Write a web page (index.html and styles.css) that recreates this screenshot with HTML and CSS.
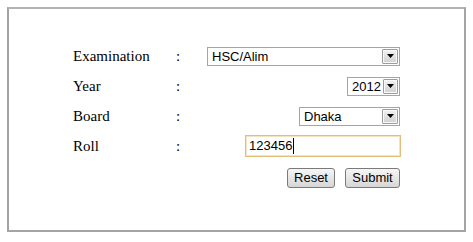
FILE: index.html
```html
<!DOCTYPE html>
<html>
<head>
    <meta charset="utf-8">
    <title>Result</title>
    <link rel="stylesheet" href="styles.css">
</head>
<body>
<div class="frame">
    <div class="form">
        <div class="label">Examination</div>
        <div class="colon">:</div>
        <div class="field">
            <div class="select sel-exam">
                <span class="value">HSC/Alim</span>
                <span class="arrow"><svg width="7" height="4" viewBox="0 0 7 4"><path d="M0 0H7L3.5 4Z" fill="#000"/></svg></span>
            </div>
        </div>

        <div class="label">Year</div>
        <div class="colon">:</div>
        <div class="field">
            <div class="select sel-year">
                <span class="value">2012</span>
                <span class="arrow"><svg width="7" height="4" viewBox="0 0 7 4"><path d="M0 0H7L3.5 4Z" fill="#000"/></svg></span>
            </div>
        </div>

        <div class="label">Board</div>
        <div class="colon">:</div>
        <div class="field">
            <div class="select sel-board">
                <span class="value">Dhaka</span>
                <span class="arrow"><svg width="7" height="4" viewBox="0 0 7 4"><path d="M0 0H7L3.5 4Z" fill="#000"/></svg></span>
            </div>
        </div>

        <div class="label">Roll</div>
        <div class="colon">:</div>
        <div class="field">
            <div class="textbox">123456<span class="caret"></span></div>
        </div>

        <div class="buttons">
            <span class="btn btn-reset">Reset</span>
            <span class="btn btn-submit">Submit</span>
        </div>
    </div>
</div>
</body>
</html>
```

FILE: styles.css
```css
* {
    box-sizing: border-box;
    margin: 0;
    padding: 0;
}

body {
    background: #fff;
    font-family: "Liberation Sans", Arial, sans-serif;
}

.frame {
    margin: 7px;
    width: 459px;
    height: 225px;
    border: 2px solid #a4a4a4;
    border-top-color: #b4b4b4;
    padding: 32px 0 0 64px;
}

.form {
    display: grid;
    grid-template-columns: 103px 31px 1fr;
    grid-auto-rows: 30px;
    align-items: center;
    width: 328px;
}

.label {
    font-family: "Liberation Serif", "Times New Roman", serif;
    font-size: 15px;
    color: #000;
}

.colon {
    font-family: "Liberation Serif", "Times New Roman", serif;
    font-size: 15px;
}

.field {
    display: flex;
    justify-content: flex-end;
    padding-right: 1px;
}

.select {
    display: flex;
    align-items: center;
    height: 19px;
    border: 1px solid #a5a5a5;
    background: #fff;
    font-size: 13px;
    color: #000;
    padding: 0 1px 0 4px;
}

.select .value {
    flex: 1;
    line-height: 17px;
}

.sel-exam { width: 193px; }
.sel-year { width: 53px; }
.sel-board { width: 101px; }

.arrow {
    display: flex;
    align-items: center;
    justify-content: center;
    width: 16px;
    height: 15px;
    margin-left: 2px;
    border: 1px solid #9c9c9c;
    border-radius: 1px;
    background: linear-gradient(#f2f2f2, #d0d0d0);
    box-shadow: inset 0 0 0 1px #fafafa;
}

.textbox {
    width: 156px;
    height: 22px;
    margin-right: -1px;
    border: 1px solid #e2be78;
    box-shadow: inset 0 0 0 1px #f4e3c0;
    font-size: 13px;
    line-height: 20px;
    padding-left: 3px;
    display: flex;
    align-items: center;
}

.caret {
    display: inline-block;
    width: 1px;
    height: 16px;
    background: #000;
    margin-left: 1px;
}

.buttons {
    grid-column: 1 / 4;
    display: flex;
    justify-content: flex-end;
    gap: 10px;
    padding-right: 1px;
    margin-top: 4px;
}

.btn {
    display: inline-block;
    height: 20px;
    border: 1px solid #7a7a7a;
    border-radius: 3px;
    background: linear-gradient(#f6f6f6 0%, #e6e6e6 50%, #d6d6d6 100%);
    font-size: 13px;
    line-height: 18px;
    text-align: center;
    color: #000;
}

.btn-reset { width: 48px; }
.btn-submit { width: 55px; }
```
